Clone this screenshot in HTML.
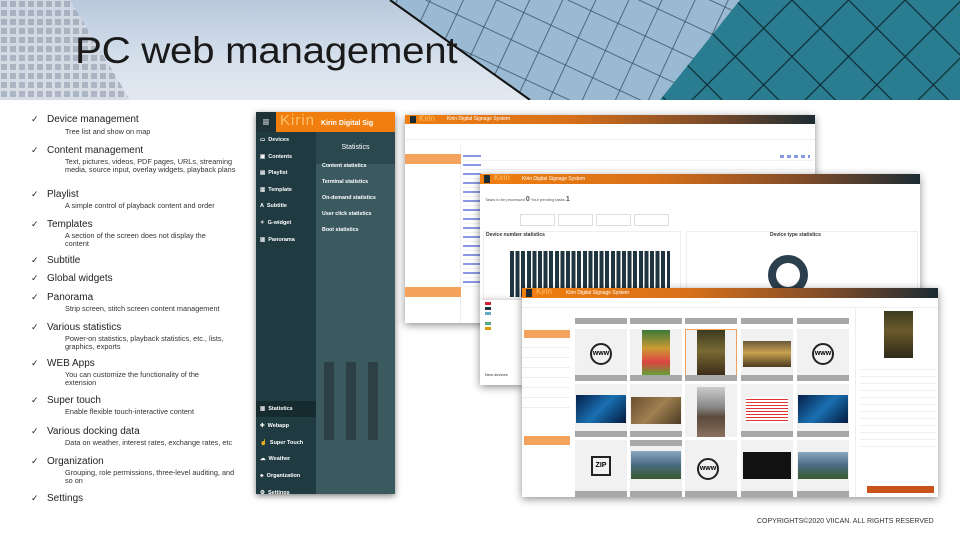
<!DOCTYPE html>
<html><head><meta charset="utf-8"><style>
*{margin:0;padding:0;box-sizing:border-box}
body{width:960px;height:540px;overflow:hidden;background:#fff;font-family:"Liberation Sans",sans-serif;position:relative}
.a{position:absolute}
.hdr{left:0;top:0;width:960px;height:100px;background:linear-gradient(180deg,#b9c8dc 0%,#d6e0ec 60%,#e3e9f1 100%);overflow:hidden}
.title{left:75px;top:30px;font-size:37px;font-weight:300;color:#1a1a1a;letter-spacing:-0.3px;transform:scaleX(1.09);transform-origin:0 0}
.li{font-size:10px;color:#222}
.ck{font-size:9px;color:#222}
.sub{font-size:7.3px;color:#333;line-height:7.6px;width:190px}
.bar{background:linear-gradient(90deg,#f07f10 0%,#d8701a 40%,#7a4a2a 75%,#1c2c33 100%)}
.win{background:#fff;box-shadow:0 2px 8px rgba(0,0,0,.45)}
.tile{background:#f1f1f1}
.tb{background:#a8a8a8;height:6px}
.bb{position:absolute;background:#a8a8a8;height:6px;width:52px}
</style></head><body>
<div class="a hdr">
 <svg width="960" height="100" style="position:absolute;left:0;top:0">
  <defs><pattern id="g1" width="9" height="9" patternUnits="userSpaceOnUse"><rect width="9" height="9" fill="#d4d9e2"/><rect x="1" y="1" width="6" height="6" fill="#a3acbb"/></pattern>
  <pattern id="g2" width="30" height="30" patternUnits="userSpaceOnUse" patternTransform="rotate(25)"><rect width="30" height="30" fill="none" stroke="#3c5366" stroke-width="0.8"/></pattern>
  <pattern id="g3" width="40" height="40" patternUnits="userSpaceOnUse" patternTransform="rotate(45)"><rect width="40" height="40" fill="none" stroke="#0e2a33" stroke-width="1.2"/></pattern></defs>
  <polygon points="0,0 70,0 130,100 0,100" fill="url(#g1)" opacity=".85"/>
  <polygon points="390,0 960,0 960,100 530,100" fill="#9ab9d2"/>
  <polygon points="390,0 960,0 960,100 530,100" fill="url(#g2)"/>
  <polygon points="740,0 960,0 960,100 660,100" fill="#2a7d90"/>
  <polygon points="740,0 960,0 960,100 660,100" fill="url(#g3)"/>
  <line x1="390" y1="0" x2="530" y2="100" stroke="#111" stroke-width="2"/>
 </svg>
</div>
<div class="a title">PC web management</div>

<div class="a ck" style="left:31px;top:114px">✓</div><div class="a li" style="left:47px;top:114px">Device management</div>
<div class="a sub" style="left:65px;top:128px">Tree list and show on map</div>
<div class="a ck" style="left:31px;top:145px">✓</div><div class="a li" style="left:47px;top:145px">Content management</div>
<div class="a sub" style="left:65px;top:158px">Text, pictures, videos, PDF pages, URLs, streaming media, source input, overlay widgets, playback plans</div>
<div class="a ck" style="left:31px;top:189px">✓</div><div class="a li" style="left:47px;top:189px">Playlist</div>
<div class="a sub" style="left:65px;top:202px">A simple control of playback content and order</div>
<div class="a ck" style="left:31px;top:219px">✓</div><div class="a li" style="left:47px;top:219px">Templates</div>
<div class="a sub" style="left:65px;top:232px;width:160px">A section of the screen does not display the content</div>
<div class="a ck" style="left:31px;top:255px">✓</div><div class="a li" style="left:47px;top:255px">Subtitle</div>
<div class="a ck" style="left:31px;top:273px">✓</div><div class="a li" style="left:47px;top:273px">Global widgets</div>
<div class="a ck" style="left:31px;top:292px">✓</div><div class="a li" style="left:47px;top:292px">Panorama</div>
<div class="a sub" style="left:65px;top:305px">Strip screen, stitch screen content management</div>
<div class="a ck" style="left:31px;top:322px">✓</div><div class="a li" style="left:47px;top:322px">Various statistics</div>
<div class="a sub" style="left:65px;top:335px;width:175px">Power-on statistics, playback statistics, etc., lists, graphics, exports</div>
<div class="a ck" style="left:31px;top:358px">✓</div><div class="a li" style="left:47px;top:358px">WEB Apps</div>
<div class="a sub" style="left:65px;top:371px;width:160px">You can customize the functionality of the extension</div>
<div class="a ck" style="left:31px;top:395px">✓</div><div class="a li" style="left:47px;top:395px">Super touch</div>
<div class="a sub" style="left:65px;top:408px">Enable flexible touch-interactive content</div>
<div class="a ck" style="left:31px;top:426px">✓</div><div class="a li" style="left:47px;top:426px">Various docking data</div>
<div class="a sub" style="left:65px;top:439px">Data on weather, interest rates, exchange rates, etc</div>
<div class="a ck" style="left:31px;top:456px">✓</div><div class="a li" style="left:47px;top:456px">Organization</div>
<div class="a sub" style="left:65px;top:469px;width:175px">Grouping, role permissions, three-level auditing, and so on</div>
<div class="a ck" style="left:31px;top:493px">✓</div><div class="a li" style="left:47px;top:493px">Settings</div>

<!-- sidebar screenshot -->
<div class="a" style="left:256px;top:112px;width:139px;height:382px;background:#33525a;box-shadow:0 2px 6px rgba(0,0,0,.5);overflow:hidden">
 <div class="a" style="left:0;top:0;width:20px;height:20px;background:#1d3338;color:#fff;font-size:12px;text-align:center;line-height:20px">≡</div>
 <div class="a" style="left:20px;top:0;width:119px;height:20px;background:#f07f10;overflow:hidden;white-space:nowrap"><span style="color:#ffc36a;font-size:15px;margin-left:4px;letter-spacing:1px">Kirin</span><span style="color:#fff;font-size:7px;font-weight:bold;margin-left:6px">Kirin Digital Sig</span></div>
 <div class="a" style="left:0;top:20px;width:60px;height:362px;background:#1f3a40"></div>
 <div class="a" style="left:60px;top:20px;width:79px;height:32px;background:#2b484f;color:#fff;font-size:7px;text-align:center;line-height:32px">Statistics</div>
 <div class="a" style="left:60px;top:52px;width:79px;height:330px;background:#3a5a60"></div>
 <div class="a" style="left:68px;top:250px;width:10px;height:78px;background:#2d4046"></div>
 <div class="a" style="left:90px;top:250px;width:10px;height:78px;background:#2d4046"></div>
 <div class="a" style="left:112px;top:250px;width:10px;height:78px;background:#2d4046"></div>
 <div class="a" style="left:0;top:289px;width:60px;height:16px;background:#152b30"></div>
 <div class="a" style="left:0;top:20px;width:60px;font-size:5.5px;color:#fff;font-weight:bold;line-height:16.6px;padding-left:4px">
  <div>▭ &nbsp;Devices</div><div>▣ &nbsp;Contents</div><div>▤ &nbsp;Playlist</div><div>▥ &nbsp;Template</div><div>A &nbsp;Subtitle</div><div>✧ &nbsp;G-widget</div><div>▥ &nbsp;Panorama</div>
 </div>
 <div class="a" style="left:0;top:289px;width:60px;font-size:5.5px;color:#fff;font-weight:bold;line-height:16.8px;padding-left:4px">
  <div>▥ &nbsp;Statistics</div><div>✚ &nbsp;Webapp</div><div>☝ &nbsp;Super Touch</div><div>☁ &nbsp;Weather</div><div>♣ &nbsp;Organization</div><div>⚙ &nbsp;Settings</div>
 </div>
 <div class="a" style="left:66px;top:47px;font-size:5.3px;color:#fff;font-weight:bold;line-height:15.9px">
  <div>Content statistics</div><div>Terminal statistics</div><div>On-demand statistics</div><div>User click statistics</div><div>Boot statistics</div>
 </div>
</div>

<!-- window 1 -->
<div class="a win" style="left:405px;top:115px;width:410px;height:208px">
 <div class="a bar" style="left:0;top:0;width:410px;height:9px"></div>
 <div class="a" style="left:5px;top:1px;width:6px;height:7px;background:#1c2c33"></div>
 <div class="a" style="left:14px;top:-1px;font-size:8px;color:#ffc36a">Kirin</div>
 <div class="a" style="left:42px;top:1px;font-size:5px;color:#fff">Kirin Digital Signage System</div>
 <div class="a" style="left:0;top:9px;width:410px;height:16px;border-bottom:1px solid #eee"></div>
 <div class="a" style="left:0;top:30px;width:56px;height:178px;border-right:1px solid #eee"></div>
 <div class="a" style="left:0;top:39px;width:56px;height:10px;background:#f5a25c"></div>
 <div class="a" style="left:0;top:172px;width:56px;height:10px;background:#f5a25c"></div>
 <div class="a" style="left:58px;top:37px;width:350px;height:140px;background:repeating-linear-gradient(180deg,#fff 0 8px,#f3f3f3 8px 9px)"></div>
 <div class="a" style="left:58px;top:40px;width:18px;height:135px;background:repeating-linear-gradient(180deg,#5a6ad8 0 2px,transparent 2px 9px);opacity:.7"></div>
 <div class="a" style="left:375px;top:40px;width:30px;height:3px;background:repeating-linear-gradient(90deg,#3355cc 0 4px,transparent 4px 7px);opacity:.6"></div>
</div>
<!-- window 2 -->
<div class="a win" style="left:480px;top:174px;width:440px;height:127px">
 <div class="a bar" style="left:0;top:0;width:440px;height:10px"></div>
 <div class="a" style="left:4px;top:1px;width:6px;height:8px;background:#1c2c33"></div>
 <div class="a" style="left:14px;top:-1px;font-size:8px;color:#ffc36a">Kirin</div>
 <div class="a" style="left:42px;top:2px;font-size:5px;color:#fff">Kirin Digital Signage System</div>
 <div class="a" style="left:5px;top:22px;font-size:4px;color:#555">Tasks to be processed <b style="font-size:7px">0</b> Your pending tasks <b style="font-size:7px">1</b></div>
 <div class="a" style="left:40px;top:40px;width:35px;height:12px;border:1px solid #ddd"></div>
 <div class="a" style="left:78px;top:40px;width:35px;height:12px;border:1px solid #ddd"></div>
 <div class="a" style="left:116px;top:40px;width:35px;height:12px;border:1px solid #ddd"></div>
 <div class="a" style="left:154px;top:40px;width:35px;height:12px;border:1px solid #ddd"></div>
 <div class="a" style="left:3px;top:57px;width:198px;height:70px;border:1px solid #eee"></div>
 <div class="a" style="left:6px;top:58px;font-size:5px;font-weight:bold;color:#333">Device number statistics</div>
 <div class="a" style="left:30px;top:77px;width:160px;height:46px;background:repeating-linear-gradient(90deg,#1f3540 0 4px,#fff 4px 5.6px)"></div>
 <div class="a" style="left:206px;top:57px;width:232px;height:70px;border:1px solid #eee"></div>
 <div class="a" style="left:290px;top:58px;font-size:5px;font-weight:bold;color:#333">Device type statistics</div>
 <div class="a" style="left:288px;top:81px;width:40px;height:40px;border-radius:50%;border:8px solid #2b3f4c"></div>
</div>
<!-- legend panel -->
<div class="a win" style="left:480px;top:300px;width:44px;height:85px">
 <div class="a" style="left:5px;top:2px;width:6px;height:3px;background:#c23"></div>
 <div class="a" style="left:5px;top:7px;width:6px;height:3px;background:#234"></div>
 <div class="a" style="left:5px;top:12px;width:6px;height:3px;background:#6ab"></div>
 <div class="a" style="left:5px;top:22px;width:6px;height:3px;background:#5a8"></div>
 <div class="a" style="left:5px;top:27px;width:6px;height:3px;background:#d90"></div>
 <div class="a" style="left:5px;top:72px;font-size:4px;color:#333">New devices</div>
</div>
<!-- window 3 -->
<div class="a win" style="left:522px;top:288px;width:416px;height:209px">
 <div class="a bar" style="left:0;top:0;width:416px;height:10px"></div>
 <div class="a" style="left:4px;top:1px;width:6px;height:8px;background:#1c2c33"></div>
 <div class="a" style="left:14px;top:-1px;font-size:8px;color:#ffc36a">Kirin</div>
 <div class="a" style="left:44px;top:2px;font-size:5px;color:#fff">Kirin Digital Signage System</div>
 <div class="a" style="left:0;top:10px;width:416px;height:10px;border-bottom:1px solid #eee"></div>
 <div class="a" style="left:2px;top:42px;width:46px;height:9px;background:#f5a25c"></div>
 <div class="a" style="left:2px;top:148px;width:46px;height:9px;background:#f5a25c"></div>
 <div class="a" style="left:0;top:50px;width:48px;height:70px;background:repeating-linear-gradient(180deg,#fff 0 9px,#eee 9px 10px)"></div>
 <div class="a" style="left:333px;top:20px;width:1px;height:189px;background:#eee"></div>
 <div class="a" style="left:362px;top:23px;width:29px;height:47px;background:linear-gradient(180deg,#3c3a1e,#6b5a2c 40%,#2e2a18)"></div>
 <div class="a" style="left:338px;top:75px;width:76px;height:90px;background:repeating-linear-gradient(180deg,#fff 0 6px,#f0f0f0 6px 7px)"></div>
 <div class="a" style="left:345px;top:198px;width:67px;height:7px;background:#c8521a"></div>
</div>
<!-- tiles -->
<div class="a" style="left:575px;top:318px;width:274px">
 <div class="a tb" style="left:0;top:0;width:52px"></div><div class="a tb" style="left:55px;top:0;width:52px"></div><div class="a tb" style="left:110px;top:0;width:52px"></div><div class="a tb" style="left:166px;top:0;width:52px"></div><div class="a tb" style="left:222px;top:0;width:52px"></div>
</div>
<div class="a tile" style="left:575px;top:329px;width:52px;height:52px"></div>
<div class="a tile" style="left:630px;top:329px;width:52px;height:52px"></div>
<div class="a tile" style="left:685px;top:329px;width:52px;height:52px;border:1px solid #f0a060"></div>
<div class="a tile" style="left:741px;top:329px;width:52px;height:52px"></div>
<div class="a tile" style="left:797px;top:329px;width:52px;height:52px"></div>
<div class="a" style="left:590px;top:343px;width:22px;height:22px;border-radius:50%;border:2px solid #222;font-size:7px;font-weight:bold;text-align:center;line-height:18px">www</div>
<div class="a" style="left:812px;top:343px;width:22px;height:22px;border-radius:50%;border:2px solid #222;font-size:7px;font-weight:bold;text-align:center;line-height:18px">www</div>
<div class="a" style="left:642px;top:330px;width:28px;height:46px;background:linear-gradient(180deg,#3a7a3a,#c93 40%,#d44 70%,#5a3)"></div>
<div class="a" style="left:697px;top:330px;width:28px;height:46px;background:linear-gradient(180deg,#3b3a1e,#7a6a35 45%,#3a2a18)"></div>
<div class="a" style="left:743px;top:341px;width:48px;height:26px;background:linear-gradient(180deg,#6a5a3a,#c9a050 45%,#4a3a20)"></div>
<div class="bb" style="left:575px;top:375px"></div><div class="bb" style="left:630px;top:375px"></div><div class="bb" style="left:685px;top:375px"></div><div class="bb" style="left:741px;top:375px"></div><div class="bb" style="left:797px;top:375px"></div>
<div class="a tile" style="left:575px;top:384px;width:52px;height:53px"></div>
<div class="a tile" style="left:630px;top:384px;width:52px;height:53px"></div>
<div class="a tile" style="left:685px;top:384px;width:52px;height:53px"></div>
<div class="a tile" style="left:741px;top:384px;width:52px;height:53px"></div>
<div class="a tile" style="left:797px;top:384px;width:52px;height:53px"></div>
<div class="a" style="left:576px;top:395px;width:50px;height:28px;background:linear-gradient(135deg,#05204a,#1a70b0 50%,#041a40)"></div>
<div class="a" style="left:631px;top:397px;width:50px;height:27px;background:linear-gradient(135deg,#6a5030,#a08050 50%,#4a3a25)"></div>
<div class="a" style="left:697px;top:387px;width:28px;height:50px;background:linear-gradient(180deg,#ccc,#888 40%,#5a4a3a 60%,#8a7060)"></div>
<div class="a" style="left:746px;top:397px;width:42px;height:26px;background:repeating-linear-gradient(180deg,#fff 0 2px,#d33 2px 3px)"></div>
<div class="a" style="left:798px;top:395px;width:50px;height:28px;background:linear-gradient(135deg,#05204a,#1a70b0 50%,#041a40)"></div>
<div class="bb" style="left:575px;top:431px"></div><div class="bb" style="left:630px;top:431px"></div><div class="bb" style="left:741px;top:431px"></div><div class="bb" style="left:797px;top:431px"></div>
<div class="a tile" style="left:575px;top:440px;width:52px;height:57px"></div>
<div class="a tile" style="left:630px;top:440px;width:52px;height:57px"></div>
<div class="a tile" style="left:685px;top:440px;width:52px;height:57px"></div>
<div class="a tile" style="left:741px;top:440px;width:52px;height:57px"></div>
<div class="a tile" style="left:797px;top:440px;width:52px;height:57px"></div>
<div class="a" style="left:591px;top:456px;width:20px;height:20px;border:2px solid #222;font-size:7px;font-weight:bold;text-align:center;line-height:16px">ZIP</div>
<div class="a" style="left:630px;top:440px;width:52px;height:6px;background:#a8a8a8"></div>
<div class="a" style="left:631px;top:451px;width:50px;height:28px;background:linear-gradient(180deg,#8aa8c0,#4a6a80 50%,#3a5a30)"></div>
<div class="a" style="left:697px;top:458px;width:22px;height:22px;border-radius:50%;border:2px solid #222;font-size:7px;font-weight:bold;text-align:center;line-height:18px">www</div>
<div class="a" style="left:743px;top:452px;width:48px;height:27px;background:#111"></div>
<div class="a" style="left:798px;top:452px;width:50px;height:27px;background:linear-gradient(180deg,#8aa8c0,#4a6a80 50%,#3a5a30)"></div>
<div class="bb" style="left:575px;top:491px"></div><div class="bb" style="left:630px;top:491px"></div><div class="bb" style="left:685px;top:491px"></div><div class="bb" style="left:741px;top:491px"></div><div class="bb" style="left:797px;top:491px"></div>

<div class="a" style="left:757px;top:518px;font-size:7px;color:#333">COPYRIGHTS©2020 VIICAN. ALL RIGHTS RESERVED</div>
</body></html>
